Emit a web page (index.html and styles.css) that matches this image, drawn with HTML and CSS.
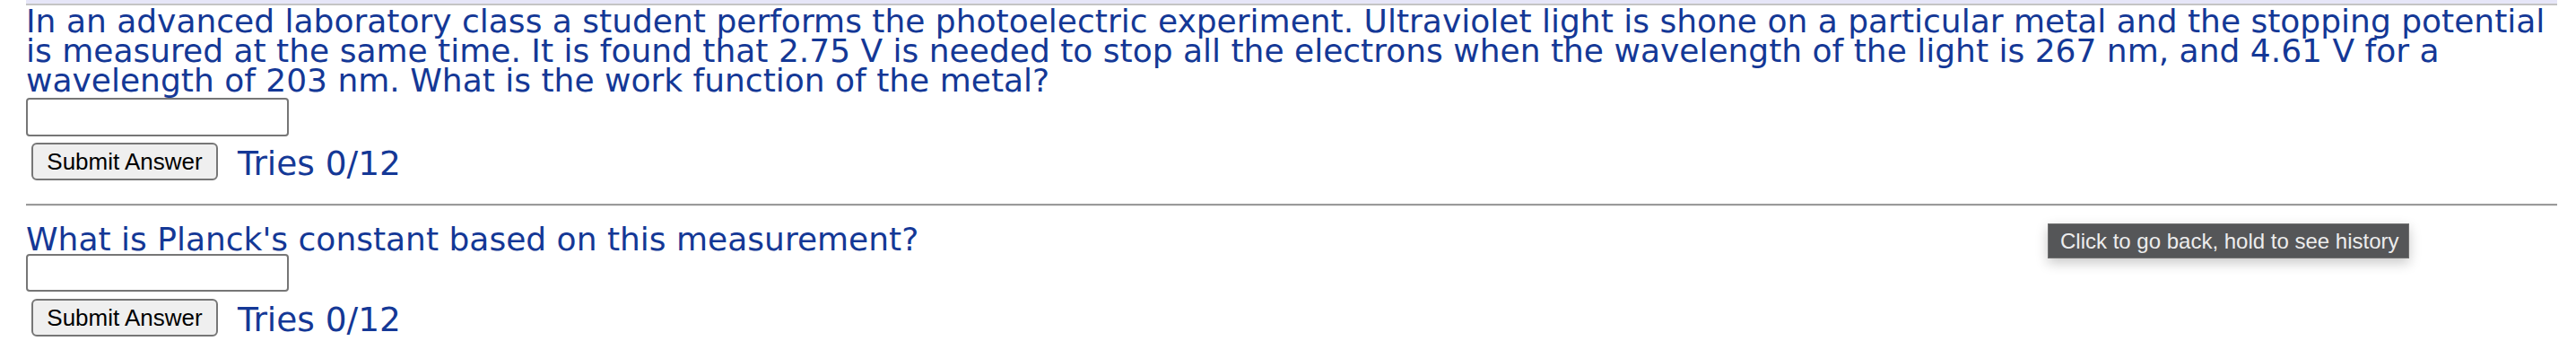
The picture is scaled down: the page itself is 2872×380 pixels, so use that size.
FILE: index.html
```html
<!DOCTYPE html>
<html>
<head>
<meta charset="utf-8">
<link rel="stylesheet" href="styles.css">
</head>
<body>
<div class="page">
  <div class="topstrip"></div>
  <div class="problem">
    <div class="question">In an advanced laboratory class a student performs the photoelectric experiment. Ultraviolet light is shone on a particular metal and the stopping potential is measured at the same time. It is found that 2.75 V is needed to stop all the electrons when the wavelength of the light is 267 nm, and 4.61 V for a wavelength of 203 nm. What is the work function of the metal?</div>
    <input class="answer" type="text">
    <div class="submitrow">
      <button class="submit">Submit Answer</button>
      <span class="tries">Tries 0/12</span>
    </div>
  </div>
  <div class="rule"></div>
  <div class="problem second">
    <div class="question">What is Planck's constant based on this measurement?</div>
    <input class="answer" type="text">
    <div class="submitrow">
      <button class="submit">Submit Answer</button>
      <span class="tries">Tries 0/12</span>
    </div>
  </div>
</div>
<div class="tooltip">Click to go back, hold to see history</div>
</body>
</html>
```
FILE: styles.css
```css
html, body {
  margin: 0;
  padding: 0;
  background: #ffffff;
}
.page {
  margin-left: 29px;
  width: 2822px;
}
.topstrip {
  height: 4px;
  background: #e6e6f8;
  border-bottom: 2px solid #c4c4c4;
}
.problem {
  display: flex;
  flex-direction: column;
  align-items: flex-start;
  padding-top: 1px;
}
.question {
  font-family: "DejaVu Sans", Verdana, sans-serif;
  font-size: 36px;
  line-height: 33px;
  color: #143896;
}
.answer {
  box-sizing: border-box;
  width: 293px;
  height: 43px;
  margin: 3px 0 0 0;
  border: 2px solid #767676;
  border-radius: 4px;
  background: #fff;
  padding: 0;
}
.submitrow {
  display: flex;
  align-items: center;
  height: 42px;
  margin-top: 7px;
  margin-left: 6px;
}
.submit {
  box-sizing: border-box;
  width: 208px;
  height: 42px;
  padding: 0;
  border: 2px solid #767676;
  border-radius: 6px;
  background: #efefef;
  color: #000;
  font-family: "Liberation Sans", Arial, sans-serif;
  font-size: 26px;
}
.tries {
  margin-left: 22px;
  margin-top: 3px;
  font-family: "DejaVu Sans", Verdana, sans-serif;
  font-size: 37.5px;
  line-height: 38px;
  color: #143896;
}
.rule {
  margin-top: 26px;
  border-top: 2px solid #9a9a9a;
  border-bottom: 1px solid #ececec;
}
.second {
  padding-top: 20px;
}
.second .answer {
  margin-top: 0;
  height: 42px;
}
.second .submitrow {
  margin-top: 8px;
}
.tooltip {
  position: absolute;
  left: 2283px;
  top: 249px;
  box-sizing: border-box;
  width: 403px;
  height: 39px;
  background: #555658;
  border: 1px solid #707070;
  color: #ededed;
  font-family: "Liberation Sans", Arial, sans-serif;
  font-size: 24px;
  line-height: 37px;
  padding-left: 13px;
  white-space: nowrap;
  box-shadow: 0 5px 14px rgba(0, 0, 0, 0.22);
}
```
